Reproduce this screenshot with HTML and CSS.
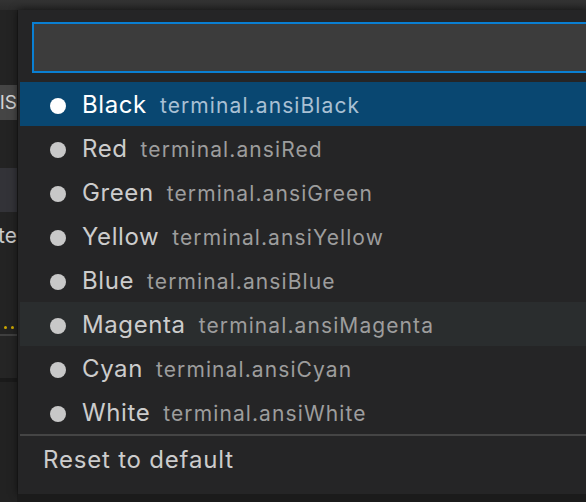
FILE: index.html
```html
<!DOCTYPE html>
<html>
<head>
<meta charset="utf-8">
<link rel="stylesheet" href="styles.css">
</head>
<body>
<div class="titlebar"></div>
<div class="main">
  <aside class="side">
    <div class="side-top"></div>
    <div class="side-tab"><span>IS</span></div>
    <div class="side-gap"></div>
    <div class="side-sel"></div>
    <div class="side-text"><span>te</span></div>
    <div class="side-space"></div>
    <div class="side-dots"><span class="ydot"></span><span class="ydot"></span></div>
    <div class="side-line"></div>
    <div class="side-rest"></div>
    <div class="side-dark"></div>
    <div class="side-bottom"></div>
  </aside>
  <div class="right">
    <section class="picker">
      <div class="input"></div>
      <ul class="list">
        <li class="row selected"><span class="dot"></span><span class="label">Black</span><span class="desc">terminal.ansiBlack</span></li>
        <li class="row"><span class="dot"></span><span class="label">Red</span><span class="desc">terminal.ansiRed</span></li>
        <li class="row"><span class="dot"></span><span class="label">Green</span><span class="desc">terminal.ansiGreen</span></li>
        <li class="row"><span class="dot"></span><span class="label">Yellow</span><span class="desc">terminal.ansiYellow</span></li>
        <li class="row"><span class="dot"></span><span class="label">Blue</span><span class="desc">terminal.ansiBlue</span></li>
        <li class="row hover"><span class="dot"></span><span class="label">Magenta</span><span class="desc">terminal.ansiMagenta</span></li>
        <li class="row"><span class="dot"></span><span class="label">Cyan</span><span class="desc">terminal.ansiCyan</span></li>
        <li class="row"><span class="dot"></span><span class="label">White</span><span class="desc">terminal.ansiWhite</span></li>
      </ul>
      <div class="sep"></div>
      <div class="reset">Reset to default</div>
    </section>
    <div class="under"></div>
  </div>
</div>
</body>
</html>
```
FILE: styles.css
```css
* { box-sizing: border-box; }
html, body {
  margin: 0;
  padding: 0;
  width: 586px;
  height: 502px;
  overflow: hidden;
  background: #1e1e1e;
  font-family: Inter, "Noto Sans", sans-serif;
}
.titlebar {
  height: 10px;
  background: linear-gradient(#333333, #2b2b2b);
}
.main {
  display: flex;
  height: 492px;
}
.side {
  width: 18px;
  flex: none;
  display: flex;
  flex-direction: column;
  background: #232323;
  border-right: 1px solid #1c1c1c;
  overflow: hidden;
}
.side-top { height: 75px; }
.side-tab {
  height: 35px;
  background: #454545;
  color: #d4d4d4;
  font-size: 19px;
  display: flex;
  align-items: center;
  justify-content: flex-end;
  white-space: nowrap;
}
.side-gap { height: 48px; }
.side-sel { height: 44px; background: #333338; }
.side-text {
  height: 46px;
  color: #cccccc;
  font-size: 21px;
  display: flex;
  align-items: center;
  justify-content: flex-end;
  white-space: nowrap;
}
.side-space { height: 62px; }
.side-dots {
  height: 14px;
  display: flex;
  gap: 4px;
  padding-left: 4px;
  align-items: center;
}
.ydot {
  width: 3px;
  height: 3px;
  border-radius: 50%;
  background: #cca700;
}
.side-line { height: 2px; background: #3f3f3f; }
.side-rest { height: 42px; background: #252525; }
.side-dark { height: 4px; background: #1a1a1a; }
.side-bottom { flex: 1; background: #222222; }

.right {
  flex: 1;
  display: flex;
  flex-direction: column;
  min-width: 0;
}
.picker {
  height: 484px;
  background: #252526;
  padding-top: 12px;
  overflow: hidden;
  box-shadow: 0 0 8px rgba(0,0,0,0.6);
}
.input {
  height: 51px;
  margin-left: 14px;
  width: 600px;
  background: #3c3c3c;
  border: 2px solid #0a7fd2;
}
.list {
  list-style: none;
  margin: 9px 0 0 2px;
  padding: 0;
}
.row {
  height: 44px;
  display: flex;
  align-items: center;
  padding-left: 30px;
  white-space: nowrap;
}
.row.selected { background: #094771; }
.row.hover { background: #2a2d2e; }
.dot {
  width: 16px;
  height: 16px;
  border-radius: 50%;
  background: #c8c8c8;
  margin-top: 3px;
  flex: none;
}
.selected .dot { background: #ffffff; }
.label {
  margin-left: 16px;
  font-size: 24px;
  letter-spacing: 0.6px;
  color: #cccccc;
  margin-top: 1px;
}
.selected .label { color: #ffffff; }
.desc {
  margin-left: 13px;
  font-size: 21px;
  letter-spacing: 1.1px;
  color: #9d9d9d;
  margin-top: 3px;
}
.selected .desc { color: #a9c0d4; }
.sep {
  height: 2px;
  margin-left: 2px;
  background: #454545;
}
.reset {
  height: 46px;
  display: flex;
  align-items: center;
  padding-left: 25px;
  font-size: 24px;
  letter-spacing: 0.8px;
  color: #cccccc;
}
.under {
  flex: 1;
  background: #1b1b1b;
}
```
